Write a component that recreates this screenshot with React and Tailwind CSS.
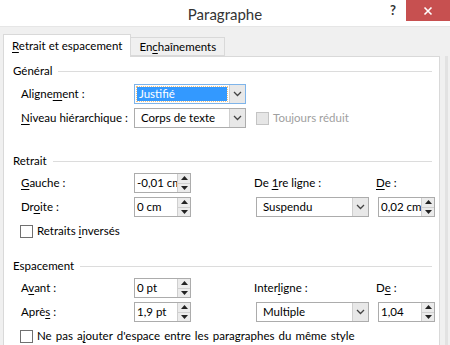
import React from 'react';

const font = { fontFamily: '"Segoe UI", Lato, "Noto Sans", Arial, sans-serif' };

const U = ({ children }) => <span className="underline underline-offset-2">{children}</span>;

const Header = ({ children }) => (
  <div className="flex items-center h-[16px] pl-[9px] pr-[7px]">
    <span className="text-[11.5px] text-black">{children}</span>
    <div className="flex-1 h-px bg-[#dcdcdc] ml-[6px]" />
  </div>
);

const Chevron = () => (
  <svg width="9" height="6" viewBox="0 0 9 6">
    <path d="M1 1 L4.5 4.5 L8 1" fill="none" stroke="#444" strokeWidth="1.3" />
  </svg>
);

const Select = ({ value, width, focused }) => (
  <div
    className={`flex h-[20px] bg-white border ${focused ? 'border-[#7eb4ea]' : 'border-[#acacac]'}`}
    style={{ width }}
  >
    <div className="flex-1 flex items-center p-[2px] min-w-0">
      {focused ? (
        <div className="w-full h-full bg-[#3399ff] text-white text-[11.5px] leading-[14px] pl-[2px] outline-1 outline-dotted outline-[#f0c080]">
          {value}
        </div>
      ) : (
        <span className="text-[11.5px] pl-[4px] text-black whitespace-nowrap">{value}</span>
      )}
    </div>
    <div className="w-[16px] flex items-center justify-center bg-[#e8e8e8] border-l border-[#cfcfcf]">
      <Chevron />
    </div>
  </div>
);

const Spin = ({ value }) => (
  <div className="flex h-[20px] w-[57px] bg-white border border-[#acacac]">
    <div className="flex-1 min-w-0 overflow-hidden whitespace-nowrap flex items-center pl-[2px] text-[11.5px] text-black">
      {value}
    </div>
    <div className="w-[13px] flex flex-col bg-[#ebebeb] border-l border-[#cfcfcf]">
      <div className="flex-1 flex items-center justify-center border-b border-[#cfcfcf]">
        <svg width="7" height="4" viewBox="0 0 7 4"><path d="M0 4 L3.5 0 L7 4 Z" fill="#222" /></svg>
      </div>
      <div className="flex-1 flex items-center justify-center">
        <svg width="7" height="4" viewBox="0 0 7 4"><path d="M0 0 L3.5 4 L7 0 Z" fill="#222" /></svg>
      </div>
    </div>
  </div>
);

const Check = ({ label, disabled }) => (
  <div className="flex items-center gap-[4px] whitespace-nowrap">
    <div className={`w-[13px] h-[13px] border ${disabled ? 'border-[#c4c4c4] bg-[#e6e6e6]' : 'border-[#707070] bg-white'}`} />
    <span className={`text-[11.5px] ${disabled ? 'text-[#a0a0a0]' : 'text-black'}`}>{label}</span>
  </div>
);

const Row = ({ label, children }) => (
  <div className="flex items-center h-[24px] pl-[17px]">
    <div className="w-[113px] text-[11.5px] text-black whitespace-nowrap">{label}</div>
    {children}
  </div>
);

export default function App() {
  return (
    <div className="w-[450px] h-[345px] overflow-hidden bg-[#f0f0f0] select-none" style={font}>
      {/* title bar */}
      <div className="h-[27px] bg-white grid grid-cols-[1fr_auto_1fr] border-b border-[#e6e6e6]">
        <div />
        <div className="text-[15px] text-[#333] leading-[27px] pt-[1px]">Paragraphe</div>
        <div className="flex justify-end items-start">
          <div className="w-[20px] h-[22px] flex items-center justify-center text-[13px] font-bold text-[#333] mr-[3px]">?</div>
          <div className="w-[44px] h-[21px] bg-[#c75050] flex items-center justify-center">
            <svg width="10" height="10" viewBox="0 0 10 10">
              <path d="M1.5 1.5 L8.5 8.5 M8.5 1.5 L1.5 8.5" stroke="#fff" strokeWidth="1.6" />
            </svg>
          </div>
        </div>
      </div>

      {/* tabs */}
      <div className="flex items-end pl-[3px] pt-[7px]">
        <div className="h-[23px] px-[8px] bg-white border border-b-0 border-[#d9d9d9] relative z-10 -mb-px flex items-center text-[11.5px] text-black whitespace-nowrap">
          <span><U>R</U>etrait et espacement</span>
        </div>
        <div className="h-[19px] px-[8px] bg-[#f0f0f0] border border-l-0 border-[#d9d9d9] flex items-center text-[11.5px] text-black whitespace-nowrap">
          <span>En<U>c</U>haînements</span>
        </div>
      </div>

      {/* panel */}
      <div className="flex">
        <div className="ml-[3px] w-[437px] h-[300px] bg-white border border-[#d9d9d9] pt-[6px]">
          <Header>Général</Header>
          <div className="h-[3px]" />
          <Row label={<span>Aligne<U>m</U>ent :</span>}>
            <Select value="Justifié" width="112px" focused />
          </Row>
          <Row label={<span><U>N</U>iveau hiérarchique :</span>}>
            <Select value="Corps de texte" width="112px" />
            <div className="ml-[10px]">
              <Check label="Toujours réduit" disabled />
            </div>
          </Row>

          <div className="h-[23px]" />
          <Header>Retrait</Header>
          <div className="h-[2px]" />
          <Row label={<span><U>G</U>auche :</span>}>
            <Spin value="-0,01 cm" />
            <div className="ml-[63px] w-[122px] text-[11.5px] whitespace-nowrap">De <U>1</U>re ligne :</div>
            <div className="text-[11.5px] whitespace-nowrap"><U>D</U>e :</div>
          </Row>
          <Row label={<span>Dr<U>o</U>ite :</span>}>
            <Spin value="0 cm" />
            <div className="ml-[65px]">
              <Select value="Suspendu" width="113px" />
            </div>
            <div className="ml-[9px]">
              <Spin value="0,02 cm" />
            </div>
          </Row>
          <div className="flex items-center h-[24px] pl-[16px]">
            <Check label={<span>Retraits <U>i</U>nversés</span>} />
          </div>

          <div className="h-[15px]" />
          <Header>Espacement</Header>
          <div className="h-[2px]" />
          <Row label={<span>A<U>v</U>ant :</span>}>
            <Spin value="0 pt" />
            <div className="ml-[63px] w-[122px] text-[11.5px] whitespace-nowrap">Inter<U>l</U>igne :</div>
            <div className="text-[11.5px] whitespace-nowrap">D<U>e</U> :</div>
          </Row>
          <Row label={<span>Aprè<U>s</U> :</span>}>
            <Spin value="1,9 pt" />
            <div className="ml-[65px]">
              <Select value="Multiple" width="113px" />
            </div>
            <div className="ml-[9px]">
              <Spin value="1,04" />
            </div>
          </Row>
          <div className="flex items-center h-[24px] pl-[16px]">
            <Check label={<span className="[word-spacing:1.2px]">Ne pas a<U>j</U>outer d'espace entre les paragraphes du même style</span>} />
          </div>
        </div>
        <div className="ml-[5px] w-[3px] h-[300px] bg-[#e2e2e2]" />
      </div>
    </div>
  );
}
